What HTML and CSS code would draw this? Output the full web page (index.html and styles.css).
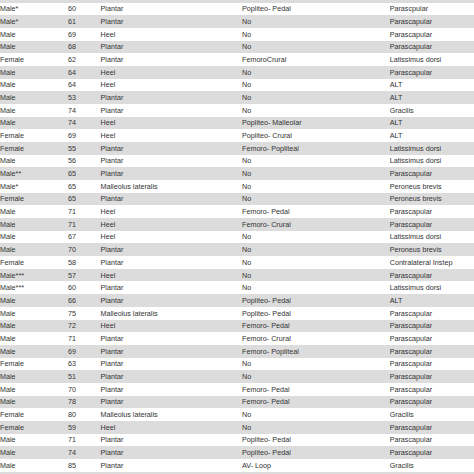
FILE: index.html
```html
<!DOCTYPE html>
<html>
<head>
<meta charset="utf-8">
<link rel="stylesheet" href="styles.css">
</head>
<body>
<div class="table">
  <div class="row"></div>
  <div class="row"><span>Male*</span><span>60</span><span>Plantar</span><span>Popliteo- Pedal</span><span>Parascpular</span></div>
  <div class="row"><span>Male*</span><span>61</span><span>Plantar</span><span>No</span><span>Parascapular</span></div>
  <div class="row"><span>Male</span><span>69</span><span>Heel</span><span>No</span><span>Parascapular</span></div>
  <div class="row"><span>Male</span><span>68</span><span>Plantar</span><span>No</span><span>Parascapular</span></div>
  <div class="row"><span>Female</span><span>62</span><span>Plantar</span><span>FemoroCrural</span><span>Latissimus dorsi</span></div>
  <div class="row"><span>Male</span><span>64</span><span>Heel</span><span>No</span><span>Parascapular</span></div>
  <div class="row"><span>Male</span><span>64</span><span>Heel</span><span>No</span><span>ALT</span></div>
  <div class="row"><span>Male</span><span>53</span><span>Plantar</span><span>No</span><span>ALT</span></div>
  <div class="row"><span>Male</span><span>74</span><span>Plantar</span><span>No</span><span>Gracilis</span></div>
  <div class="row"><span>Male</span><span>74</span><span>Heel</span><span>Popliteo- Malleolar</span><span>ALT</span></div>
  <div class="row"><span>Female</span><span>69</span><span>Heel</span><span>Popliteo- Crural</span><span>ALT</span></div>
  <div class="row"><span>Female</span><span>55</span><span>Plantar</span><span>Femoro- Popliteal</span><span>Latissimus dorsi</span></div>
  <div class="row"><span>Male</span><span>56</span><span>Plantar</span><span>No</span><span>Latissimus dorsi</span></div>
  <div class="row"><span>Male**</span><span>65</span><span>Plantar</span><span>No</span><span>Parascapular</span></div>
  <div class="row"><span>Male*</span><span>65</span><span>Malleolus lateralis</span><span>No</span><span>Peroneus brevis</span></div>
  <div class="row"><span>Female</span><span>65</span><span>Plantar</span><span>No</span><span>Peroneus brevis</span></div>
  <div class="row"><span>Male</span><span>71</span><span>Heel</span><span>Femoro- Pedal</span><span>Parascapular</span></div>
  <div class="row"><span>Male</span><span>71</span><span>Heel</span><span>Femoro- Crural</span><span>Parascapular</span></div>
  <div class="row"><span>Male</span><span>67</span><span>Heel</span><span>No</span><span>Latissimus dorsi</span></div>
  <div class="row"><span>Male</span><span>70</span><span>Plantar</span><span>No</span><span>Peroneus brevis</span></div>
  <div class="row"><span>Female</span><span>58</span><span>Plantar</span><span>No</span><span>Contralateral Instep</span></div>
  <div class="row"><span>Male***</span><span>57</span><span>Heel</span><span>No</span><span>Parascapular</span></div>
  <div class="row"><span>Male***</span><span>60</span><span>Plantar</span><span>No</span><span>Latissimus dorsi</span></div>
  <div class="row"><span>Male</span><span>66</span><span>Plantar</span><span>Popliteo- Pedal</span><span>ALT</span></div>
  <div class="row"><span>Male</span><span>75</span><span>Malleolus lateralis</span><span>Popliteo- Pedal</span><span>Parascapular</span></div>
  <div class="row"><span>Male</span><span>72</span><span>Heel</span><span>Femoro- Pedal</span><span>Parascapular</span></div>
  <div class="row"><span>Male</span><span>71</span><span>Plantar</span><span>Femoro- Crural</span><span>Parascapular</span></div>
  <div class="row"><span>Male</span><span>69</span><span>Plantar</span><span>Femoro- Popliteal</span><span>Parascapular</span></div>
  <div class="row"><span>Female</span><span>63</span><span>Plantar</span><span>No</span><span>Parascapular</span></div>
  <div class="row"><span>Male</span><span>51</span><span>Plantar</span><span>No</span><span>Parascapular</span></div>
  <div class="row"><span>Male</span><span>70</span><span>Plantar</span><span>Femoro- Pedal</span><span>Parascapular</span></div>
  <div class="row"><span>Male</span><span>78</span><span>Plantar</span><span>Femoro- Pedal</span><span>Parascapular</span></div>
  <div class="row"><span>Female</span><span>80</span><span>Malleolus lateralis</span><span>No</span><span>Gracilis</span></div>
  <div class="row"><span>Female</span><span>59</span><span>Heel</span><span>No</span><span>Parascapular</span></div>
  <div class="row"><span>Male</span><span>71</span><span>Plantar</span><span>Popliteo- Pedal</span><span>Parascapular</span></div>
  <div class="row"><span>Male</span><span>74</span><span>Plantar</span><span>Popliteo- Pedal</span><span>Parascapular</span></div>
  <div class="row"><span>Male</span><span>85</span><span>Plantar</span><span>AV- Loop</span><span>Gracilis</span></div>
  <div class="row"></div>
</div>
</body>
</html>
```

FILE: styles.css
```css
html, body {
  margin: 0;
  padding: 0;
  background: #ffffff;
  overflow: hidden;
}

.table {
  margin-top: -9.98px;
  font-family: "Liberation Sans", Arial, sans-serif;
  font-size: 7.2px;
  color: #333333;
}

.row {
  display: grid;
  grid-template-columns: 68px 32.5px 141.5px 147.7px 1fr;
  height: 12.68px;
  line-height: 12.68px;
  padding-top: 0.7px;
  box-sizing: border-box;
  white-space: nowrap;
  background: #ffffff;
}

.row:nth-child(odd) {
  background: #dcdcdc;
}

.row span {
  display: block;
}
```
